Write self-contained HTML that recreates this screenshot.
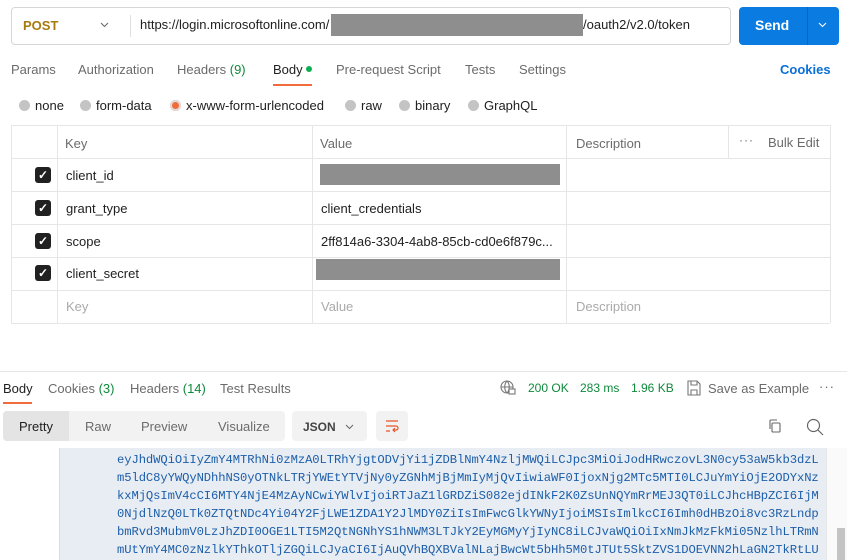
<!DOCTYPE html>
<html><head><meta charset="utf-8"><style>
*{box-sizing:border-box;margin:0;padding:0}
body{width:847px;height:560px;overflow:hidden;background:#fff;font-family:"Liberation Sans",sans-serif;font-size:13px;color:#212121;position:relative}
.a{position:absolute;white-space:nowrap}
.g{color:#6b6b6b}
.gr{color:#0f8a3c}
.rad{display:inline-block;width:11px;height:11px;border-radius:50%;background:#c4c4c4;vertical-align:-1px;margin-right:5px}
.cb{position:absolute;left:35px;width:16px;height:16px;border-radius:3px;background:#212121;color:#fff;font-size:12px;line-height:16px;text-align:center;font-weight:bold}
.hl{position:absolute;left:11px;width:819px;height:1px;background:#e6e6e6}
.vl{position:absolute;top:125px;width:1px;height:198px;background:#e6e6e6}
.code{position:absolute;left:117px;font-family:"Liberation Mono",monospace;font-size:12.2px;color:#1c5ea8;letter-spacing:-0.08px}
</style></head><body>
<!-- URL bar -->
<div class="a" style="left:11px;top:7px;width:720px;height:38px;border:1px solid #d6d6d6;border-radius:4px"></div>
<div class="a" style="left:23px;top:18px;color:#a87a10;font-weight:bold;font-size:13px">POST</div>
<svg class="a" style="left:100px;top:22px" width="9" height="6" viewBox="0 0 9 6" fill="none" stroke="#6b6b6b" stroke-width="1.1"><path d="M1 1l3.5 3.5L8 1"/></svg>
<div class="a" style="left:130px;top:15px;width:1px;height:22px;background:#e0e0e0"></div>
<div class="a" style="left:140px;top:17px;font-size:13px">https://login.microsoftonline.com/</div>
<div class="a" style="left:331px;top:14px;width:252px;height:22px;background:#8e8e8e"></div>
<div class="a" style="left:583px;top:17px;font-size:13px">/oauth2/v2.0/token</div>
<div class="a" style="left:739px;top:7px;width:100px;height:38px;background:#0a7be0;border-radius:4px"></div>
<div class="a" style="left:755px;top:17px;color:#fff;font-weight:bold;font-size:14px">Send</div>
<div class="a" style="left:807px;top:7px;width:1px;height:38px;background:#0865c0"></div>
<svg class="a" style="left:818px;top:22px" width="9" height="6" viewBox="0 0 9 6" fill="none" stroke="#fff" stroke-width="1.1"><path d="M1 1l3.5 3.5L8 1"/></svg>
<!-- tabs -->
<div class="a g" style="left:11px;top:62px">Params</div>
<div class="a g" style="left:78px;top:62px">Authorization</div>
<div class="a g" style="left:177px;top:62px">Headers <span class="gr">(9)</span></div>
<div class="a" style="left:273px;top:62px">Body <span style="display:inline-block;width:6px;height:6px;border-radius:50%;background:#0cb050;vertical-align:2px"></span></div>
<div class="a" style="left:273px;top:84px;width:39px;height:2px;background:#f26b3a"></div>
<div class="a g" style="left:336px;top:62px">Pre-request Script</div>
<div class="a g" style="left:465px;top:62px">Tests</div>
<div class="a g" style="left:519px;top:62px">Settings</div>
<div class="a" style="left:780px;top:62px;color:#0a6fd8;font-weight:bold">Cookies</div>
<!-- radios -->
<div class="a" style="left:19px;top:98px"><span class="rad"></span>none</div>
<div class="a" style="left:80px;top:98px"><span class="rad"></span>form-data</div>
<div class="a" style="left:170px;top:98px"><span class="rad" style="background:#f26b3a;box-shadow:0 0 0 2px #ddd inset"></span>x-www-form-urlencoded</div>
<div class="a" style="left:345px;top:98px"><span class="rad"></span>raw</div>
<div class="a" style="left:399px;top:98px"><span class="rad"></span>binary</div>
<div class="a" style="left:468px;top:98px"><span class="rad"></span>GraphQL</div>
<!-- table -->
<div class="hl" style="top:125px"></div><div class="hl" style="top:158px"></div><div class="hl" style="top:191px"></div><div class="hl" style="top:224px"></div><div class="hl" style="top:257px"></div><div class="hl" style="top:290px"></div><div class="hl" style="top:323px"></div>
<div class="vl" style="left:11px"></div><div class="vl" style="left:57px"></div><div class="vl" style="left:312px"></div><div class="vl" style="left:566px"></div><div class="vl" style="left:830px"></div>
<div class="a" style="left:728px;top:125px;width:1px;height:33px;background:#e6e6e6"></div>
<div class="a g" style="left:65px;top:136px">Key</div>
<div class="a g" style="left:320px;top:136px">Value</div>
<div class="a g" style="left:576px;top:136px">Description</div>
<div class="a g" style="left:739px;top:133px;font-size:12px;letter-spacing:1px">···</div>
<div class="a g" style="left:768px;top:135px">Bulk Edit</div>
<div class="cb" style="top:167px">✓</div><div class="a" style="left:66px;top:168px">client_id</div>
<div class="a" style="left:320px;top:164px;width:240px;height:21px;background:#8e8e8e"></div>
<div class="cb" style="top:200px">✓</div><div class="a" style="left:66px;top:201px">grant_type</div>
<div class="a" style="left:321px;top:201px">client_credentials</div>
<div class="cb" style="top:233px">✓</div><div class="a" style="left:66px;top:234px">scope</div>
<div class="a" style="left:321px;top:234px">2ff814a6-3304-4ab8-85cb-cd0e6f879c...</div>
<div class="cb" style="top:265px">✓</div><div class="a" style="left:66px;top:266px">client_secret</div>
<div class="a" style="left:316px;top:259px;width:244px;height:21px;background:#8e8e8e"></div>
<div class="a" style="left:66px;top:299px;color:#aaa">Key</div>
<div class="a" style="left:321px;top:299px;color:#aaa">Value</div>
<div class="a" style="left:576px;top:299px;color:#aaa">Description</div>
<!-- response -->
<div class="a" style="left:0;top:371px;width:847px;height:1px;background:#e6e6e6"></div>
<div class="a" style="left:3px;top:381px">Body</div>
<div class="a" style="left:3px;top:402px;width:29px;height:2px;background:#f26b3a"></div>
<div class="a g" style="left:48px;top:381px">Cookies <span class="gr">(3)</span></div>
<div class="a g" style="left:130px;top:381px">Headers <span class="gr">(14)</span></div>
<div class="a g" style="left:220px;top:381px">Test Results</div>
<svg class="a" style="left:500px;top:380px" width="16" height="16" viewBox="0 0 16 16" fill="none" stroke="#777" stroke-width="1.1"><circle cx="7" cy="7" r="6"/><path d="M1 7h12M7 1c-3 3-3 9 0 12M7 1c3 3 3 9 0 12"/><rect x="9" y="9" width="6" height="5" fill="#fff"/></svg>
<div class="a gr" style="left:528px;top:381px;font-size:12px">200 OK</div>
<div class="a gr" style="left:580px;top:381px;font-size:12px">283 ms</div>
<div class="a gr" style="left:631px;top:381px;font-size:12px">1.96 KB</div>
<svg class="a" style="left:687px;top:380px" width="14" height="16" viewBox="0 0 14 16" fill="none" stroke="#777" stroke-width="1.1"><path d="M1 1h9l3 3v11H1z M4 1v4h6V1 M4 15v-5h6v5"/></svg>
<div class="a g" style="left:708px;top:381px">Save as Example</div>
<div class="a g" style="left:819px;top:379px;letter-spacing:1px">···</div>
<!-- toolbar -->
<div class="a" style="left:3px;top:411px;width:282px;height:30px;background:#f2f2f2;border-radius:4px"></div>
<div class="a" style="left:3px;top:411px;width:66px;height:30px;background:#e4e4e4;border-radius:4px 0 0 4px"></div>
<div class="a" style="left:19px;top:419px">Pretty</div>
<div class="a g" style="left:85px;top:419px">Raw</div>
<div class="a g" style="left:141px;top:419px">Preview</div>
<div class="a g" style="left:218px;top:419px">Visualize</div>
<div class="a" style="left:292px;top:411px;width:75px;height:30px;background:#f2f2f2;border-radius:4px"></div>
<div class="a" style="left:303px;top:420px;font-size:12px;font-weight:bold;color:#444">JSON</div>
<svg class="a" style="left:345px;top:424px" width="9" height="6" viewBox="0 0 9 6" fill="none" stroke="#6b6b6b" stroke-width="1.1"><path d="M1 1l3.5 3.5L8 1"/></svg>
<div class="a" style="left:376px;top:411px;width:32px;height:30px;background:#f2f2f2;border-radius:4px"></div>
<svg class="a" style="left:384px;top:418px" width="16" height="16" viewBox="0 0 16 16" fill="none" stroke="#e8562a" stroke-width="1.2"><path d="M2 3h12M2 8h10a2 2 0 0 1 0 4H9M11 10l-2 2 2 2M2 13h4"/></svg>
<svg class="a" style="left:767px;top:418px" width="16" height="16" viewBox="0 0 16 16" fill="none" stroke="#666" stroke-width="1.1"><rect x="5" y="5" width="8" height="9" rx="1"/><path d="M3 11V3a1 1 0 0 1 1-1h6"/></svg>
<svg class="a" style="left:806px;top:418px" width="18" height="18" viewBox="0 0 18 18" fill="none" stroke="#666" stroke-width="1.2"><circle cx="7.5" cy="7.5" r="6"/><path d="M12 12l5 5"/></svg>
<!-- code -->
<div class="a" style="left:59px;top:448px;width:767px;height:112px;background:#e8edf4;border-left:1px solid #d8dde5"></div>
<div class="a" style="left:826px;top:448px;width:21px;height:112px;background:#fafafa;border-left:1px solid #e6e6e6"></div>
<div class="a" style="left:837px;top:528px;width:8px;height:32px;background:#c4c4c4"></div>
<div class="code" style="top:453px">eyJhdWQiOiIyZmY4MTRhNi0zMzA0LTRhYjgtODVjYi1jZDBlNmY4NzljMWQiLCJpc3MiOiJodHRwczovL3N0cy53aW5kb3dzL</div>
<div class="code" style="top:471px">m5ldC8yYWQyNDhhNS0yOTNkLTRjYWEtYTVjNy0yZGNhMjBjMmIyMjQvIiwiaWF0IjoxNjg2MTc5MTI0LCJuYmYiOjE2ODYxNz</div>
<div class="code" style="top:489px">kxMjQsImV4cCI6MTY4NjE4MzAyNCwiYWlvIjoiRTJaZ1lGRDZiS082ejdINkF2K0ZsUnNQYmRrMEJ3QT0iLCJhcHBpZCI6IjM</div>
<div class="code" style="top:507px">0NjdlNzQ0LTk0ZTQtNDc4Yi04Y2FjLWE1ZDA1Y2JlMDY0ZiIsImFwcGlkYWNyIjoiMSIsImlkcCI6Imh0dHBzOi8vc3RzLndp</div>
<div class="code" style="top:525px">bmRvd3MubmV0LzJhZDI0OGE1LTI5M2QtNGNhYS1hNWM3LTJkY2EyMGMyYjIyNC8iLCJvaWQiOiIxNmJkMzFkMi05NzlhLTRmN</div>
<div class="code" style="top:543px">mUtYmY4MC0zNzlkYThkOTljZGQiLCJyaCI6IjAuQVhBQXBValNLajBwcWt5bHh5M0tJTUt5SktZVS1DOEVNN2hLaGN2TkRtLU</div>
</body></html>
